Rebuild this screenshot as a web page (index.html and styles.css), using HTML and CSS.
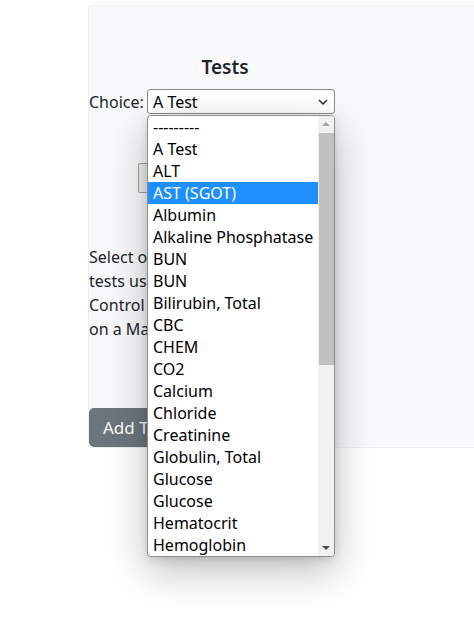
FILE: index.html
```html
<!DOCTYPE html>
<html>
<head>
<meta charset="utf-8">
<link rel="stylesheet" href="styles.css">
</head>
<body>
<div class="page">
  <div class="card">
    <h2 class="title">Tests</h2>
    <div class="choice-row">
      <label class="choice-label">Choice:</label>
      <div class="select">
        <span class="select-value">A Test</span>
        <svg class="chevron" width="10" height="6" viewBox="0 0 10 6"><path d="M1 1 L5 5 L9 1" fill="none" stroke="#222" stroke-width="1.3"/></svg>
      </div>
    </div>
    <div class="submit-row">
      <button class="submit">Submit</button>
    </div>
    <p class="help">Select one or more<br>tests using Shift or<br>Control (Command<br>on a Mac)</p>
    <button class="add-btn">Add Test</button>

    <div class="dropdown">
      <ul class="options">
        <li>---------</li>
        <li>A Test</li>
        <li>ALT</li>
        <li class="selected">AST (SGOT)</li>
        <li>Albumin</li>
        <li>Alkaline Phosphatase</li>
        <li>BUN</li>
        <li>BUN</li>
        <li>Bilirubin, Total</li>
        <li>CBC</li>
        <li>CHEM</li>
        <li>CO2</li>
        <li>Calcium</li>
        <li>Chloride</li>
        <li>Creatinine</li>
        <li>Globulin, Total</li>
        <li>Glucose</li>
        <li>Glucose</li>
        <li>Hematocrit</li>
        <li>Hemoglobin</li>
      </ul>
      <div class="scrollbar">
        <div class="arrow up"></div>
        <div class="thumb"></div>
        <div class="arrow down"></div>
      </div>
    </div>
  </div>
</div>
</body>
</html>
```

FILE: styles.css
```css
html, body {
  margin: 0;
  padding: 0;
  background: #ffffff;
  overflow: hidden;
}
body {
  width: 474px;
  height: 620px;
  font-family: "Noto Sans", "Open Sans", sans-serif;
  font-size: 16px;
  color: #212529;
}
.page {
  padding: 5px 0 0 88px;
}
.card {
  position: relative;
  width: 386px;
  background: #f8f9fa;
  border: 1px solid #eceef0;
  border-right: none;
  border-radius: 3px 0 0 3px;
  padding-top: 49px;
  box-sizing: border-box;
}
.title {
  margin: 0;
  width: 272px;
  text-align: center;
  font-size: 19px;
  line-height: 24px;
  font-weight: 600;
  color: #212529;
}
.choice-row {
  display: flex;
  align-items: center;
  margin-top: 10px;
  height: 25px;
}
.choice-label {
  font-size: 16px;
  line-height: 22px;
  width: 58px;
}
.select {
  display: flex;
  align-items: center;
  justify-content: space-between;
  width: 188px;
  height: 25px;
  box-sizing: border-box;
  border: 1px solid #8a8a8a;
  border-radius: 3px;
  background: #fff;
  padding: 0 6px 0 5px;
  color: #000;
}
.select-value {
  font-size: 16px;
  line-height: 22px;
}
.chevron {
  display: block;
}
.submit-row {
  margin-top: 49px;
  padding-left: 49px;
  height: 30px;
}
.submit {
  height: 30px;
  padding: 0 12px;
  font-family: inherit;
  font-size: 16px;
  background: #efefef;
  border: 1px solid #a3a3a3;
  border-radius: 2px;
  color: #000;
}
.help {
  margin: 52px 0 0 0;
  font-size: 16px;
  line-height: 24px;
  color: #212529;
}
.add-btn {
  display: block;
  margin-top: 67px;
  height: 39px;
  padding: 0 14px;
  font-family: inherit;
  font-size: 17px;
  color: #fff;
  background: #6c757d;
  border: none;
  border-radius: 5px;
}
.dropdown {
  position: absolute;
  left: 58px;
  top: 109px;
  width: 188px;
  height: 442px;
  box-sizing: border-box;
  border: 1px solid #8d8d8d;
  border-radius: 4px;
  background: #fff;
  display: flex;
  overflow: hidden;
  box-shadow: 0 14px 40px rgba(0, 0, 0, 0.26), 0 3px 8px rgba(0, 0, 0, 0.12);
}
.options {
  list-style: none;
  margin: 0;
  padding: 0;
  flex: 1;
  overflow: hidden;
}
.options li {
  height: 22px;
  line-height: 23px;
  padding-left: 5px;
  font-size: 16px;
  color: #000;
  white-space: nowrap;
}
.options li.selected {
  background: #1e8fff;
  color: #fff;
}
.scrollbar {
  width: 16px;
  background: #f1f1f1;
  display: flex;
  flex-direction: column;
  align-items: center;
}
.arrow {
  width: 0;
  height: 0;
  border-left: 4px solid transparent;
  border-right: 4px solid transparent;
  margin: 6px 0;
}
.arrow.up {
  border-bottom: 4px solid #a3a3a3;
}
.arrow.down {
  border-top: 4px solid #505050;
  margin-top: auto;
}
.thumb {
  width: 15px;
  height: 232px;
  background: #c1c1c1;
  margin-top: 1px;
}
```
